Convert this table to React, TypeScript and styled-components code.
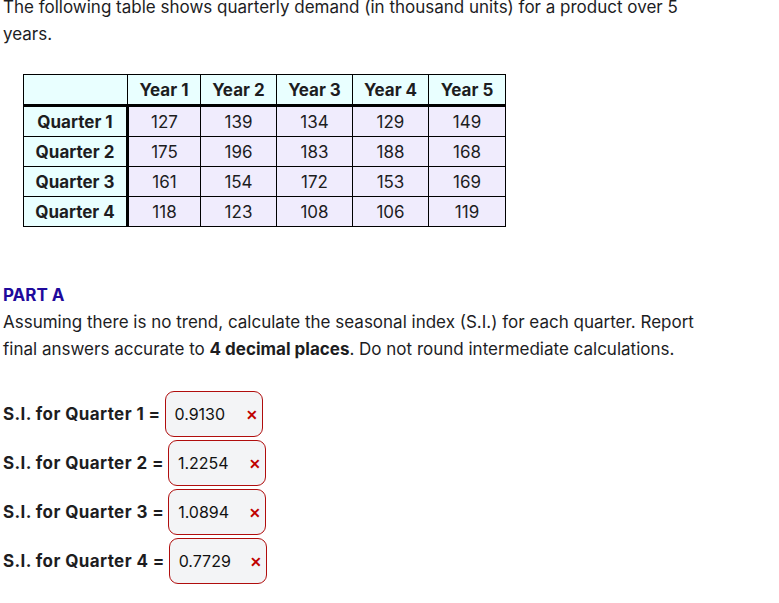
import React from 'react'
import styled, { createGlobalStyle } from 'styled-components'

const GlobalStyle = createGlobalStyle`
  body {
    margin: 0;
    background: #fff;
    color: #1d1d1f;
    font-family: Inter, "Noto Sans", sans-serif;
    font-size: 17px;
  }
`

const Page = styled.div`
  margin-top: -6px;
  padding-left: 3px;
  line-height: 27px;
`

const P = styled.p`
  margin: 0;
  max-width: 700px;
`

const Table = styled.table`
  margin: 26px 0 0 20px;
  border-collapse: collapse;
  line-height: 20px;
`

const Th = styled.th<{ $w?: number }>`
  width: ${(p) => (p.$w ? `${p.$w}px` : 'auto')};
  height: 29px;
  padding: 0;
  border: 1px solid #000;
  border-bottom: 3px solid #000;
  background: #e9ffff;
  font-weight: 700;
  text-align: center;
`

const RowHead = styled.th`
  height: 29px;
  padding: 0;
  border: 1px solid #000;
  border-right: 3px solid #000;
  background: #e9ffff;
  font-weight: 700;
  text-align: center;
`

const Td = styled.td`
  padding: 0;
  border: 1px solid #000;
  background: #f0ecfd;
  text-align: center;
`

const Heading = styled.div`
  margin-top: 55px;
  color: #1f0a9c;
  font-weight: 700;
`

const Answers = styled.div`
  margin-top: 28px;
  display: flex;
  flex-direction: column;
  gap: 3px;
`

const AnswerRow = styled.div`
  display: flex;
  align-items: center;
  gap: 4px;
`

const Label = styled.span`
  font-weight: 700;
  letter-spacing: 0.4px;
`

const Box = styled.div`
  width: 98px;
  height: 46px;
  box-sizing: border-box;
  display: flex;
  align-items: center;
  justify-content: space-between;
  padding: 0 4px 0 9px;
  border: 1px solid #b00d0d;
  border-radius: 9px;
  background: #f3f4f6;
  font-size: 16px;
  color: #111;
`

const Cross = styled.span`
  color: #c00000;
  font-size: 14px;
  font-weight: 700;
`

const years = ['Year 1', 'Year 2', 'Year 3', 'Year 4', 'Year 5']
const widths = [72, 75, 75, 75, 76]
const rows: [string, number[]][] = [
  ['Quarter 1', [127, 139, 134, 129, 149]],
  ['Quarter 2', [175, 196, 183, 188, 168]],
  ['Quarter 3', [161, 154, 172, 153, 169]],
  ['Quarter 4', [118, 123, 108, 106, 119]],
]
const answers = ['0.9130', '1.2254', '1.0894', '0.7729']

const App = (): React.ReactElement => (
  <>
    <GlobalStyle />
    <Page>
      <P>
        The following table shows quarterly demand (in thousand units) for a product over 5 years.
      </P>
      <Table>
        <thead>
          <tr>
            <Th $w={103} />
            {years.map((y, i) => (
              <Th key={y} $w={widths[i]}>
                {y}
              </Th>
            ))}
          </tr>
        </thead>
        <tbody>
          {rows.map(([q, vals]) => (
            <tr key={q}>
              <RowHead>{q}</RowHead>
              {vals.map((v, i) => (
                <Td key={i}>{v}</Td>
              ))}
            </tr>
          ))}
        </tbody>
      </Table>
      <Heading>PART A</Heading>
      <P>
        Assuming there is no trend, calculate the seasonal index (S.I.) for each quarter. Report
        final answers accurate to <b>4 decimal places</b>. Do not round intermediate calculations.
      </P>
      <Answers>
        {answers.map((a, i) => (
          <AnswerRow key={a}>
            <Label>S.I. for Quarter {i + 1} =</Label>
            <Box>
              <span>{a}</span>
              <Cross>✕</Cross>
            </Box>
          </AnswerRow>
        ))}
      </Answers>
    </Page>
  </>
)

export default App
